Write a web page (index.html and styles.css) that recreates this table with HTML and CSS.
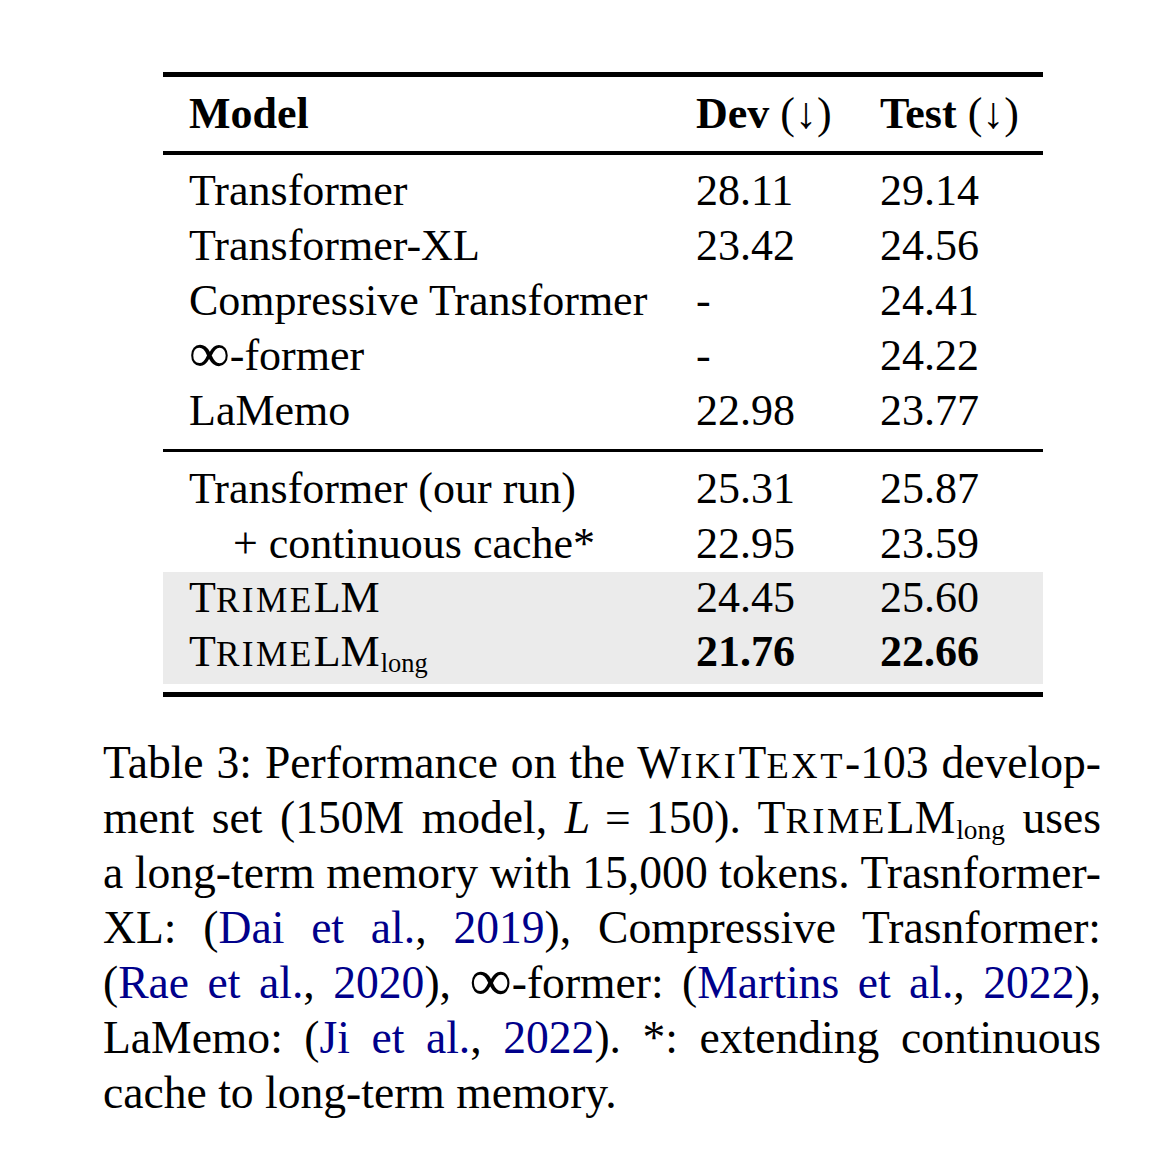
FILE: index.html
```html
<!DOCTYPE html>
<html lang="en">
<head>
<meta charset="utf-8">
<title>Table 3</title>
<link rel="stylesheet" href="styles.css">
</head>
<body>
<div class="page">
  <div class="tbl">
    <table class="results">
      <colgroup><col class="c-model"><col class="c-dev"><col class="c-test"></colgroup>
      <thead>
        <tr><th>Model</th><th>Dev <span class="arrow">(↓)</span></th><th>Test <span class="arrow">(↓)</span></th></tr>
      </thead>
      <tbody>
        <tr class="first"><td>Transformer</td><td>28.11</td><td>29.14</td></tr>
        <tr><td>Transformer-XL</td><td>23.42</td><td>24.56</td></tr>
        <tr><td>Compressive Transformer</td><td>-</td><td>24.41</td></tr>
        <tr><td><span class="inf">∞</span>-former</td><td>-</td><td>24.22</td></tr>
        <tr class="last"><td>LaMemo</td><td>22.98</td><td>23.77</td></tr>
        <tr class="split"><td>Transformer (our run)</td><td>25.31</td><td>25.87</td></tr>
        <tr class="pre"><td class="indent">+ continuous cache*</td><td>22.95</td><td>23.59</td></tr>
        <tr class="hl hl-a"><td>T<span class="sc">RIME</span>LM</td><td>24.45</td><td>25.60</td></tr>
        <tr class="hl hl-b"><td>T<span class="sc">RIME</span>LM<span class="sub">long</span></td><td class="best">21.76</td><td class="best">22.66</td></tr>
      </tbody>
    </table>
  </div>
  <div class="caption">
    <div class="ln">Table 3: Performance on the W<span class="sc">IKI</span>T<span class="sc">EXT</span>-103 develop-</div>
    <div class="ln">ment set (150M model, <span class="math"><span class="mi">L</span><span class="rel">=</span>150</span>). T<span class="sc">RIME</span>LM<span class="sub">long</span> uses</div>
    <div class="ln">a long-term memory with 15,000 tokens. Trasnformer-</div>
    <div class="ln">XL: (<a class="cite">Dai et al.</a>, <a class="cite">2019</a>), Compressive Trasnformer:</div>
    <div class="ln">(<a class="cite">Rae et al.</a>, <a class="cite">2020</a>), <span class="inf">∞</span>-former: (<a class="cite">Martins et al.</a>, <a class="cite">2022</a>),</div>
    <div class="ln">LaMemo: (<a class="cite">Ji et al.</a>, <a class="cite">2022</a>). *: extending continuous</div>
    <div class="ln end">cache to long-term memory.</div>
  </div>
</div>
</body>
</html>
```

FILE: styles.css
```css
html, body {
  margin: 0;
  padding: 0;
  background: #ffffff;
}

body {
  font-family: "Liberation Serif", "Times New Roman", serif;
  color: #000000;
}

.page {
  padding: 72px 0 0 103px;
  width: 998px;
}

.tbl {
  margin-left: 60px;
  width: 880px;
  border-top: 5px solid #000;
  border-bottom: 5px solid #000;
  padding-bottom: 8px;
}

.results {
  width: 880px;
  table-layout: fixed;
  border-collapse: separate;
  border-spacing: 0;
  font-size: 44px;
}

.c-model { width: 507px; }
.c-dev { width: 184px; }
.c-test { width: 189px; }

.results th,
.results td {
  padding: 0 0 0 26px;
  text-align: left;
  white-space: nowrap;
  line-height: 55px;
  font-weight: normal;
}

.results th {
  line-height: 74px;
  font-weight: bold;
  border-bottom: 4px solid #000;
}

.arrow {
  font-weight: normal;
  line-height: 1;
}

.results tr.first td { padding-top: 8px; }
.results tr.last td { padding-bottom: 11px; }
.results tr.split td { border-top: 3px solid #000; padding-top: 9px; }
.results tr.pre td { padding-bottom: 1px; }
.results tr.hl td { background: #ebebeb; }
.results tr.hl-a td { line-height: 52px; }
.results tr.hl-b td { padding-bottom: 5px; }
.results td.indent { padding-left: 70px; }
.results td.best { font-weight: bold; }

.sc {
  font-size: 0.8em;
  line-height: 1;
  letter-spacing: 0.07em;
}

.sub {
  font-size: 0.6em;
  line-height: 0;
  vertical-align: -0.22em;
  margin-left: 1px;
}

.inf {
  font-size: 1.3em;
  line-height: 0;
  vertical-align: -0.04em;
}

.mi {
  font-style: italic;
}

.math {
  display: inline-block;
}

.rel {
  margin: 0 0.33em;
}

.caption {
  margin-top: 38px;
  font-size: 45.6px;
  line-height: 55px;
}

.caption .ln {
  text-align: justify;
  text-align-last: justify;
  height: 55px;
}

.caption .ln.end {
  text-align-last: left;
}

.cite {
  color: #00008b;
  text-decoration: none;
}
```
